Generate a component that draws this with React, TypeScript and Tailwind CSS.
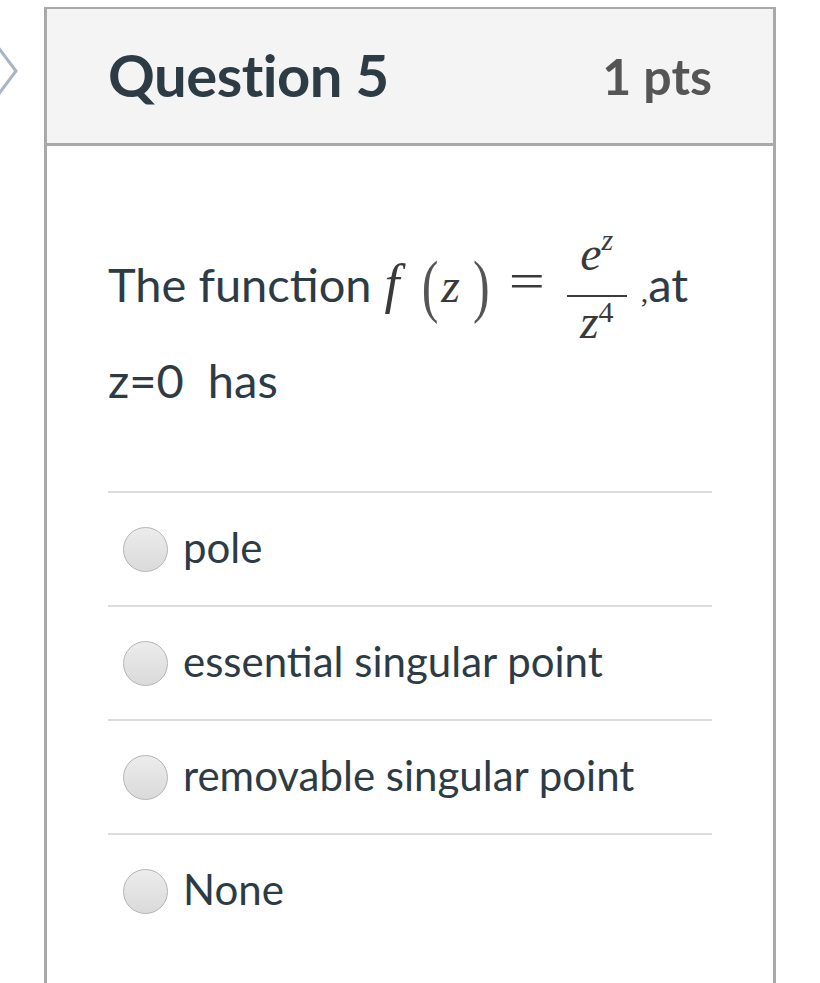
import React from "react";

const answers = ["pole", "essential singular point", "removable singular point", "None"];

function Radio() {
	return (
		<span className="block w-[45px] h-[45px] shrink-0 rounded-full border border-[#b5b5b5] bg-gradient-to-b from-[#ececec] to-[#dadada]" />
	);
}

// f(z) = e^z / z^4, drawn as real text in a serif face
function Formula() {
	return (
		<span className="leading-none text-[#3a3a3a] font-['Liberation_Serif',serif]">
			<span className="italic text-[54px] ml-[13px]">f</span>
			<span className="inline-block scale-y-[1.4] text-[50px] ml-[22px] text-[#555]">(</span>
			<span className="italic text-[48px] ml-[3px]">z</span>
			<span className="inline-block scale-y-[1.4] text-[50px] ml-[13px] text-[#555]">)</span>
			<span className="inline-block scale-y-[0.8] text-[64px] ml-[19px]">=</span>
			<span className="inline-flex flex-col align-middle -my-[20px] ml-[22px] w-[60px]">
				<span className="h-[64px] flex items-end justify-center pb-[17px]">
					<span className="leading-none whitespace-nowrap">
						<span className="italic text-[48px]">e</span>
						<span className="italic text-[30px] align-[20px]">z</span>
					</span>
				</span>
				<span className="h-[2px] w-full bg-[#3a3a3a]" />
				<span className="h-[54px] flex items-start justify-center">
					<span className="leading-none whitespace-nowrap">
						<span className="italic text-[48px]">z</span>
						<span className="text-[30px] align-[16px]">4</span>
					</span>
				</span>
			</span>
			<span className="text-[30px] ml-[14px]">,</span>
		</span>
	);
}

export default function App() {
	return (
		<div className="relative w-[820px] h-[983px] overflow-hidden bg-white font-['Lato',sans-serif] text-[#2d3b45]">
			{/* chevron peeking in from the left */}
			<svg className="absolute left-0 top-[45px]" width="20" height="54" viewBox="0 0 20 54" fill="none">
				<path d="M-2 2 L16 26 L-2 50" stroke="#a7b6c6" strokeWidth="3" />
			</svg>

			<div className="ml-[44px] mt-[7px] w-[732px] h-[990px] border-x-[3px] border-t-[2px] border-[#a9a9a9]">
				{/* Header */}
				<div className="h-[137px] bg-[#f4f4f4] border-b-[3px] border-[#a9a9a9] flex items-center justify-between px-[61px]">
					<h2 className="text-[58px] font-bold tracking-[-0.5px] -mt-[3px]">Question 5</h2>
					<span className="text-[50px] font-bold text-[#555]">1 pts</span>
				</div>

				{/* Body */}
				<div className="px-[61px] pt-[90px]">
					<div className="text-[47px] leading-[96px] whitespace-nowrap">
						The function
						<Formula />
						at
					</div>
					<div className="text-[47px] leading-[96px]">z=0&nbsp; has</div>

					<div className="mt-[63px]">
						{answers.map((a) => (
							<div
								key={a}
								className="h-[114px] flex items-center gap-[15px] pl-[15px] border-t-2 border-[#dcdcdc]"
							>
								<Radio />
								<span className="text-[42px] -mt-[4px]">{a}</span>
							</div>
						))}
					</div>
				</div>
			</div>
		</div>
	);
}
